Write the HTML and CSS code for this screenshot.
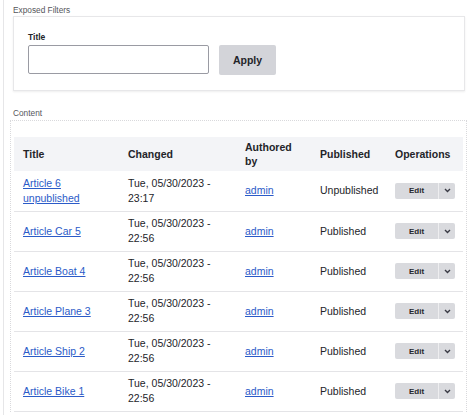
FILE: index.html
```html
<!DOCTYPE html>
<html>
<head>
<meta charset="utf-8">
<link rel="stylesheet" href="styles.css">
</head>
<body>
<div class="wrap">
  <div class="label">Exposed Filters</div>
  <div class="filters">
    <div class="field-label">Title</div>
    <div class="filter-row">
      <input class="text-input" type="text">
      <button class="apply">Apply</button>
    </div>
  </div>
  <div class="label content-label">Content</div>
  <div class="content">
    <table class="grid">
      <colgroup>
        <col class="c1"><col class="c2"><col class="c3"><col class="c4"><col class="c5">
      </colgroup>
      <thead>
        <tr><th>Title</th><th>Changed</th><th>Authored by</th><th>Published</th><th>Operations</th></tr>
      </thead>
      <tbody>
        <tr><td><a href="#">Article 6 unpublished</a></td><td>Tue, 05/30/2023 - 23:17</td><td><a href="#">admin</a></td><td>Unpublished</td><td><span class="ops"><span class="edit">Edit</span><span class="toggle"><svg width="7" height="5" viewBox="0 0 7 5"><path d="M1 1l2.5 2.5L6 1" fill="none" stroke="#3a3b45" stroke-width="1.4"/></svg></span></span></td></tr>
        <tr><td><a href="#">Article Car 5</a></td><td>Tue, 05/30/2023 - 22:56</td><td><a href="#">admin</a></td><td>Published</td><td><span class="ops"><span class="edit">Edit</span><span class="toggle"><svg width="7" height="5" viewBox="0 0 7 5"><path d="M1 1l2.5 2.5L6 1" fill="none" stroke="#3a3b45" stroke-width="1.4"/></svg></span></span></td></tr>
        <tr><td><a href="#">Article Boat 4</a></td><td>Tue, 05/30/2023 - 22:56</td><td><a href="#">admin</a></td><td>Published</td><td><span class="ops"><span class="edit">Edit</span><span class="toggle"><svg width="7" height="5" viewBox="0 0 7 5"><path d="M1 1l2.5 2.5L6 1" fill="none" stroke="#3a3b45" stroke-width="1.4"/></svg></span></span></td></tr>
        <tr><td><a href="#">Article Plane 3</a></td><td>Tue, 05/30/2023 - 22:56</td><td><a href="#">admin</a></td><td>Published</td><td><span class="ops"><span class="edit">Edit</span><span class="toggle"><svg width="7" height="5" viewBox="0 0 7 5"><path d="M1 1l2.5 2.5L6 1" fill="none" stroke="#3a3b45" stroke-width="1.4"/></svg></span></span></td></tr>
        <tr><td><a href="#">Article Ship 2</a></td><td>Tue, 05/30/2023 - 22:56</td><td><a href="#">admin</a></td><td>Published</td><td><span class="ops"><span class="edit">Edit</span><span class="toggle"><svg width="7" height="5" viewBox="0 0 7 5"><path d="M1 1l2.5 2.5L6 1" fill="none" stroke="#3a3b45" stroke-width="1.4"/></svg></span></span></td></tr>
        <tr><td><a href="#">Article Bike 1</a></td><td>Tue, 05/30/2023 - 22:56</td><td><a href="#">admin</a></td><td>Published</td><td><span class="ops"><span class="edit">Edit</span><span class="toggle"><svg width="7" height="5" viewBox="0 0 7 5"><path d="M1 1l2.5 2.5L6 1" fill="none" stroke="#3a3b45" stroke-width="1.4"/></svg></span></span></td></tr>
      </tbody>
    </table>
  </div>
</div>
</body>
</html>
```
FILE: styles.css
```css
html, body {
  margin: 0;
  padding: 0;
  background: #fff;
  overflow: hidden;
}
body {
  font-family: "Liberation Sans", Arial, sans-serif;
  color: #232429;
  width: 474px;
  height: 415px;
}
.wrap {
  box-sizing: border-box;
  margin-left: 3px;
  border-left: 1px solid #e6e6e8;
  padding-left: 9px;
  height: 415px;
}
.label {
  font-size: 8.3px;
  line-height: 10px;
  color: #55565b;
  padding-top: 5px;
  height: 11px;
}
.filters {
  width: 421px;
  height: 58px;
  border: 1px solid #e7e7e9;
  box-shadow: 0 1px 2px rgba(0, 0, 0, 0.07);
  padding: 15px 15px 0 14px;
}
.field-label {
  font-size: 8.5px;
  font-weight: bold;
  line-height: 10px;
  margin-bottom: 3px;
}
.filter-row {
  display: flex;
  gap: 10px;
  align-items: flex-start;
}
.text-input {
  box-sizing: border-box;
  width: 181px;
  height: 29px;
  border: 1px solid #9a9ba3;
  border-radius: 2px;
  margin: 0;
  padding: 0 6px;
  background: #fff;
}
.apply {
  box-sizing: border-box;
  width: 57px;
  height: 30px;
  border: 0;
  border-radius: 2px;
  background: #d3d4d9;
  color: #232429;
  font-family: "Liberation Sans", Arial, sans-serif;
  font-size: 10.5px;
  font-weight: bold;
  margin: 0;
  padding: 0;
}
.content-label {
  margin-top: 17px;
  padding-top: 0;
  height: 12px;
}
.content {
  margin-left: -3px;
  width: 449px;
  border: 1px dotted #d9d9dc;
  border-bottom: 0;
  padding: 16px 3px 0 3px;
}
.grid {
  border-collapse: collapse;
  table-layout: fixed;
  width: 449px;
  font-size: 10.5px;
}
.c1 { width: 105px; }
.c2 { width: 117px; }
.c3 { width: 75px; }
.c4 { width: 75px; }
.c5 { width: 77px; }
.grid th {
  background: #f3f4f7;
  height: 34px;
  padding: 0 9px;
  text-align: left;
  font-weight: bold;
  line-height: 14px;
  vertical-align: middle;
}
.grid td {
  height: 40px;
  padding: 0 9px;
  line-height: 15px;
  vertical-align: middle;
  border-bottom: 1px solid #e4e4e7;
  box-sizing: border-box;
}
.grid a {
  color: #2b5bc8;
  text-decoration: underline;
}
.ops {
  display: inline-flex;
  height: 16px;
  vertical-align: middle;
  border-radius: 2px;
  overflow: hidden;
  background: #d9dade;
}
.edit {
  width: 43px;
  display: flex;
  align-items: center;
  justify-content: center;
  font-size: 8px;
  font-weight: bold;
  color: #26272c;
}
.toggle {
  width: 16px;
  border-left: 1px solid #eeeef0;
  display: flex;
  align-items: center;
  justify-content: center;
}
```
